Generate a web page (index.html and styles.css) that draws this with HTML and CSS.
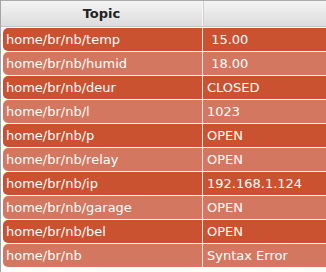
FILE: index.html
```html
<html>

<head>
    <title>Topics</title>
    <link rel="stylesheet" href="styles.css">
</head>
<body>
<div class="table">
    <div class="head">
        <div class="th">Topic</div>
        <div class="th"></div>
    </div>
    <div class="row dark"><span class="cell">home/br/nb/temp</span><span class="cell val"> 15.00</span></div>
    <div class="row light"><span class="cell">home/br/nb/humid</span><span class="cell val"> 18.00</span></div>
    <div class="row dark"><span class="cell">home/br/nb/deur</span><span class="cell val">CLOSED</span></div>
    <div class="row light"><span class="cell">home/br/nb/l</span><span class="cell val">1023</span></div>
    <div class="row dark"><span class="cell">home/br/nb/p</span><span class="cell val">OPEN</span></div>
    <div class="row light"><span class="cell">home/br/nb/relay</span><span class="cell val">OPEN</span></div>
    <div class="row dark"><span class="cell">home/br/nb/ip</span><span class="cell val">192.168.1.124</span></div>
    <div class="row light"><span class="cell">home/br/nb/garage</span><span class="cell val">OPEN</span></div>
    <div class="row dark"><span class="cell">home/br/nb/bel</span><span class="cell val">OPEN</span></div>
    <div class="row light"><span class="cell">home/br/nb</span><span class="cell val">Syntax Error</span></div>
</div>
</body>
</html>
```

FILE: styles.css
```css
html, body {
    margin: 0;
    background-color: #FFFFFF;
    font-family: "DejaVu Sans", sans-serif;
    font-size: 13px;
}

.table {
    min-height: 100vh;
    border-left: 1px solid #A4A4A4;
    box-sizing: border-box;
}

.head {
    display: grid;
    grid-template-columns: 201px 1fr;
    height: 25px;
    border-top: 1px solid #ABABAB;
    border-bottom: 1px solid #C6C6C6;
    margin-bottom: 1px;
    background: linear-gradient(#F4F4F4, #DCDCDC);
}

.th {
    font-weight: bold;
    color: #222222;
    text-align: center;
    line-height: 25px;
}

.th + .th {
    border-left: 1px solid #F8F8F8;
    box-shadow: inset 1px 0 0 #D0D0D0;
}

.row {
    display: grid;
    grid-template-columns: 199px 1fr;
    height: 23px;
    margin-left: 2px;
    margin-bottom: 1px;
    border-radius: 5px 0 0 5px;
    color: #FFFFFF;
    line-height: 23px;
}

.dark {
    background-color: #CB5231;
}

.light {
    background-color: #D37760;
}

.cell {
    padding-left: 3px;
    white-space: pre;
}

.val {
    padding-left: 4px;
    border-left: 1px solid #F3E2DC;
}
```
